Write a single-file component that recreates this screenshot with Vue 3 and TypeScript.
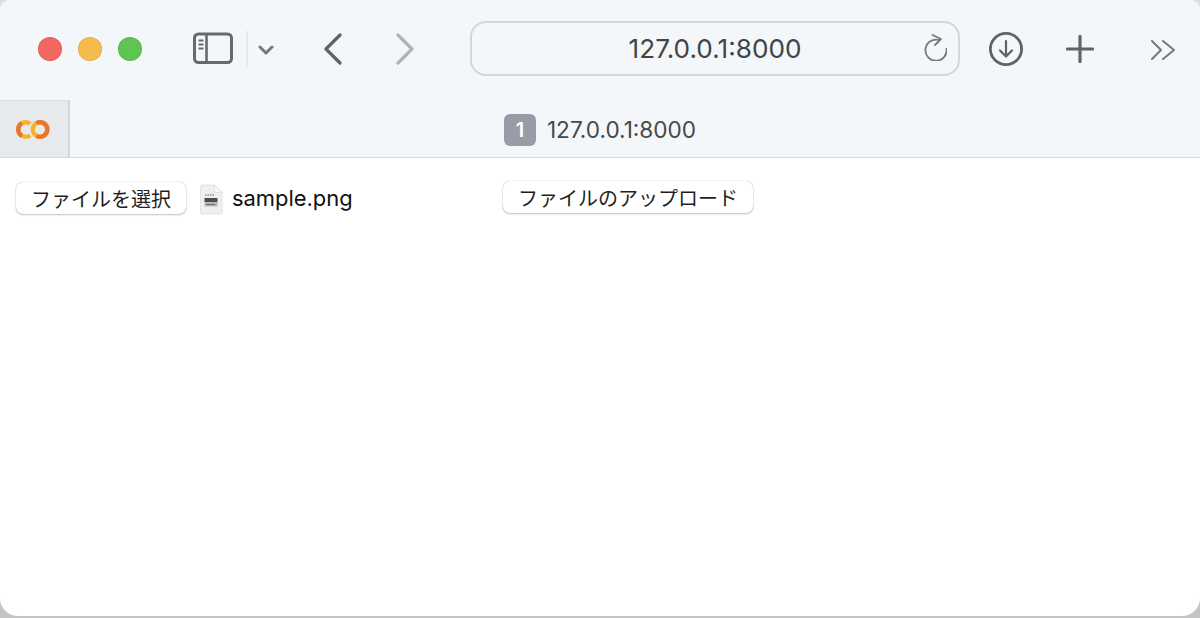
<script setup lang="ts">
const host = '127.0.0.1:8000'
const fileName = 'sample.png'
</script>

<template>
  <div class="desk">
    <div class="window">
      <header class="toolbar">
        <div class="lights">
          <span class="light red"></span>
          <span class="light yellow"></span>
          <span class="light green"></span>
        </div>
        <svg class="ic-sidebar" width="42" height="33" viewBox="0 0 42 33" fill="none" stroke="#68696b">
          <rect x="2.500" y="2" width="37" height="28.5" rx="4" stroke-width="3" />
          <path d="M14.500 2v28.5" stroke-width="2.6" />
          <path d="M6.500 8.500h5M6.500 12.500h5M6.500 16.500h5" stroke-width="1.900" />
        </svg>
        <span class="divider"></span>
        <svg class="ic-more" width="16" height="10" viewBox="0 0 16 10" fill="none" stroke="#77787a" stroke-width="3" stroke-linecap="round" stroke-linejoin="round">
          <path d="M2 2l6 6 6-6" />
        </svg>
        <svg class="ic-back" width="20" height="32" viewBox="0 0 20 32" fill="none" stroke="#626365" stroke-width="3.200" stroke-linecap="round" stroke-linejoin="round">
          <path d="M17 2L3 16l14 14" />
        </svg>
        <svg class="ic-forward" width="20" height="32" viewBox="0 0 20 32" fill="none" stroke="#b2b3b5" stroke-width="3.200" stroke-linecap="round" stroke-linejoin="round">
          <path d="M3 2l14 14L3 30" />
        </svg>
        <div class="address">
          <span class="address-text">{{ host }}</span>
          <svg class="ic-reload" width="24" height="28" viewBox="0 0 24 28" fill="none" stroke="#77787a" stroke-width="1.800" stroke-linecap="round" stroke-linejoin="round">
            <path d="M16 7a10.600 10.600 0 1 0 7.500 8.600" />
            <path d="M9.500 2L18 6l-6 6" />
          </svg>
        </div>
        <svg class="ic-download" width="36" height="36" viewBox="0 0 36 36" fill="none" stroke="#626365" stroke-linecap="round" stroke-linejoin="round">
          <circle cx="18" cy="18" r="15.600" stroke-width="2.800" />
          <path d="M18 10v15M12 19.500l6 6 6-6" stroke-width="2.200" />
        </svg>
        <svg class="ic-plus" width="28" height="28" viewBox="0 0 28 28" fill="none" stroke="#626365" stroke-width="3.200" stroke-linecap="round">
          <path d="M14 1.500v25M1.500 14h25" />
        </svg>
        <svg class="ic-overflow" width="26" height="22" viewBox="0 0 26 22" fill="none" stroke="#77787a" stroke-width="2.100" stroke-linecap="round" stroke-linejoin="round">
          <path d="M2 2l9 9-9 9M13 2l11 9-11 9" />
        </svg>
      </header>

      <nav class="tabs">
        <div class="tab-pinned">
          <svg width="34" height="21" viewBox="0 0 34 21" fill="none" stroke-width="4.400">
            <path d="M14.200 4.900A7.300 7.300 0 1 0 14.200 16.100" stroke="#f4b233" />
            <path d="M5.850 4.200A7.300 7.300 0 0 0 5.850 16.800" stroke="#e8762c" />
            <circle cx="24" cy="10.500" r="7.300" stroke="#f4b233" />
            <path d="M20.500 4.100A7.300 7.300 0 1 1 20.500 16.900" stroke="#e8762c" />
          </svg>
        </div>
        <div class="tab-current">
          <span class="tab-badge">1</span>
          <span class="tab-title">{{ host }}</span>
        </div>
      </nav>

      <main class="page">
        <div class="file-picker">
          <button class="btn" type="button">ファイルを選択</button>
          <svg class="file-icon" width="24" height="31" viewBox="0 0 24 31">
            <path d="M1.500 2.500a1.500 1.500 0 0 1 1.500-1.500h12.500l7.500 7.500v20a1.500 1.500 0 0 1-1.500 1.500H3a1.500 1.500 0 0 1-1.500-1.500z" fill="#efefef" stroke="#e2e2e2" />
            <path d="M15.500 1v6a1.500 1.500 0 0 0 1.500 1.500h6z" fill="#fafafa" stroke="#e2e2e2" />
            <path d="M6 11h9" stroke="#8f8f8f" stroke-width="1.300" stroke-dasharray="1.500 1" />
            <rect x="5.500" y="14" width="13" height="4" fill="#4a4c4f" />
            <rect x="5.500" y="18" width="13" height="4.500" fill="#b4b8bc" />
            <path d="M7 20.500h9" stroke="#66696d" stroke-width="1" />
          </svg>
          <span class="file-name">{{ fileName }}</span>
        </div>
        <button class="btn" type="button">ファイルのアップロード</button>
      </main>
    </div>
  </div>
</template>

<style>
html,
body {
  margin: 0;
  height: 100%;
  overflow: hidden;
}
</style>

<style scoped>
.desk {
  height: 618px;
  background: linear-gradient(#dfdfdf 0, #dfdfdf 30px, #c4c4c4 300px);
}

.window {
  height: 616px;
  background: #fff;
  border-radius: 10px 10px 18px 18px;
  overflow: hidden;
  font-family: Inter, "Noto Sans CJK JP", sans-serif;
}

.toolbar {
  height: 100px;
  box-sizing: border-box;
  padding: 0 0 3px 38px;
  display: flex;
  align-items: center;
  background: #f4f7fa;
}

.lights {
  display: flex;
  gap: 16px;
}

.light {
  width: 24px;
  height: 24px;
  border-radius: 50%;
  box-sizing: border-box;
  border: 1px solid rgba(0, 0, 0, 0.07);
}

.red { background: #f2675f; }
.yellow { background: #f5bb4d; }
.green { background: #60c453; }

.ic-sidebar { margin-left: 50px; }

.divider {
  width: 2px;
  height: 36px;
  margin-left: 12px;
  background: #e6e9ec;
}

.ic-more { margin-left: 10px; margin-top: 2px; }
.ic-back { margin-left: 49px; }
.ic-forward { margin-left: 52px; }

.address {
  position: relative;
  width: 490px;
  height: 55px;
  box-sizing: border-box;
  margin-left: 55px;
  display: flex;
  align-items: center;
  justify-content: center;
  border: 2px solid #d4d7da;
  border-radius: 16px;
}

.address-text {
  font-size: 26.200px;
  color: #434446;
}

.ic-reload {
  position: absolute;
  right: 11px;
  top: 10px;
}

.ic-download { margin-left: 28px; }
.ic-plus { margin-left: 42px; }
.ic-overflow { margin-left: 56px; margin-top: 2px; }

.tabs {
  height: 58px;
  box-sizing: border-box;
  display: grid;
  grid-template-columns: 70px 1fr 70px;
  background: #f4f7fa;
  border-bottom: 1px solid #d9dbdd;
}

.tab-pinned {
  display: flex;
  align-items: center;
  justify-content: center;
  padding: 1px 3px 0 0;
  background: #e7eaec;
  border-top: 1px solid #dcdee0;
  border-right: 2px solid #d3d5d7;
}

.tab-current {
  display: flex;
  align-items: center;
  justify-content: center;
  gap: 11px;
  padding-top: 2px;
}

.tab-badge {
  width: 32px;
  height: 32px;
  display: flex;
  align-items: center;
  justify-content: center;
  border-radius: 6px;
  background: #9a9ba6;
  color: #fff;
  font-size: 20px;
  font-weight: 600;
}

.tab-title {
  font-size: 22.600px;
  color: #48494b;
}

.page {
  padding: 23px 16px 0;
  display: flex;
  align-items: flex-start;
}

.file-picker {
  width: 487px;
  display: flex;
  align-items: center;
}

.btn {
  height: 32px;
  padding: 0 15px;
  flex-shrink: 0;
  border: none;
  border-radius: 7px;
  background: #fff;
  box-shadow: 0 0 1px rgba(0, 0, 0, 0.35), 0 1px 2px rgba(0, 0, 0, 0.22);
  font-family: "Noto Sans CJK JP", sans-serif;
  font-size: 20px;
  line-height: 34px;
  color: #1f1f1f;
}

.file-icon { margin-left: 13px; margin-top: 3px; }

.file-name {
  margin-left: 9px;
  font-size: 21.900px;
  color: #111;
}
</style>
